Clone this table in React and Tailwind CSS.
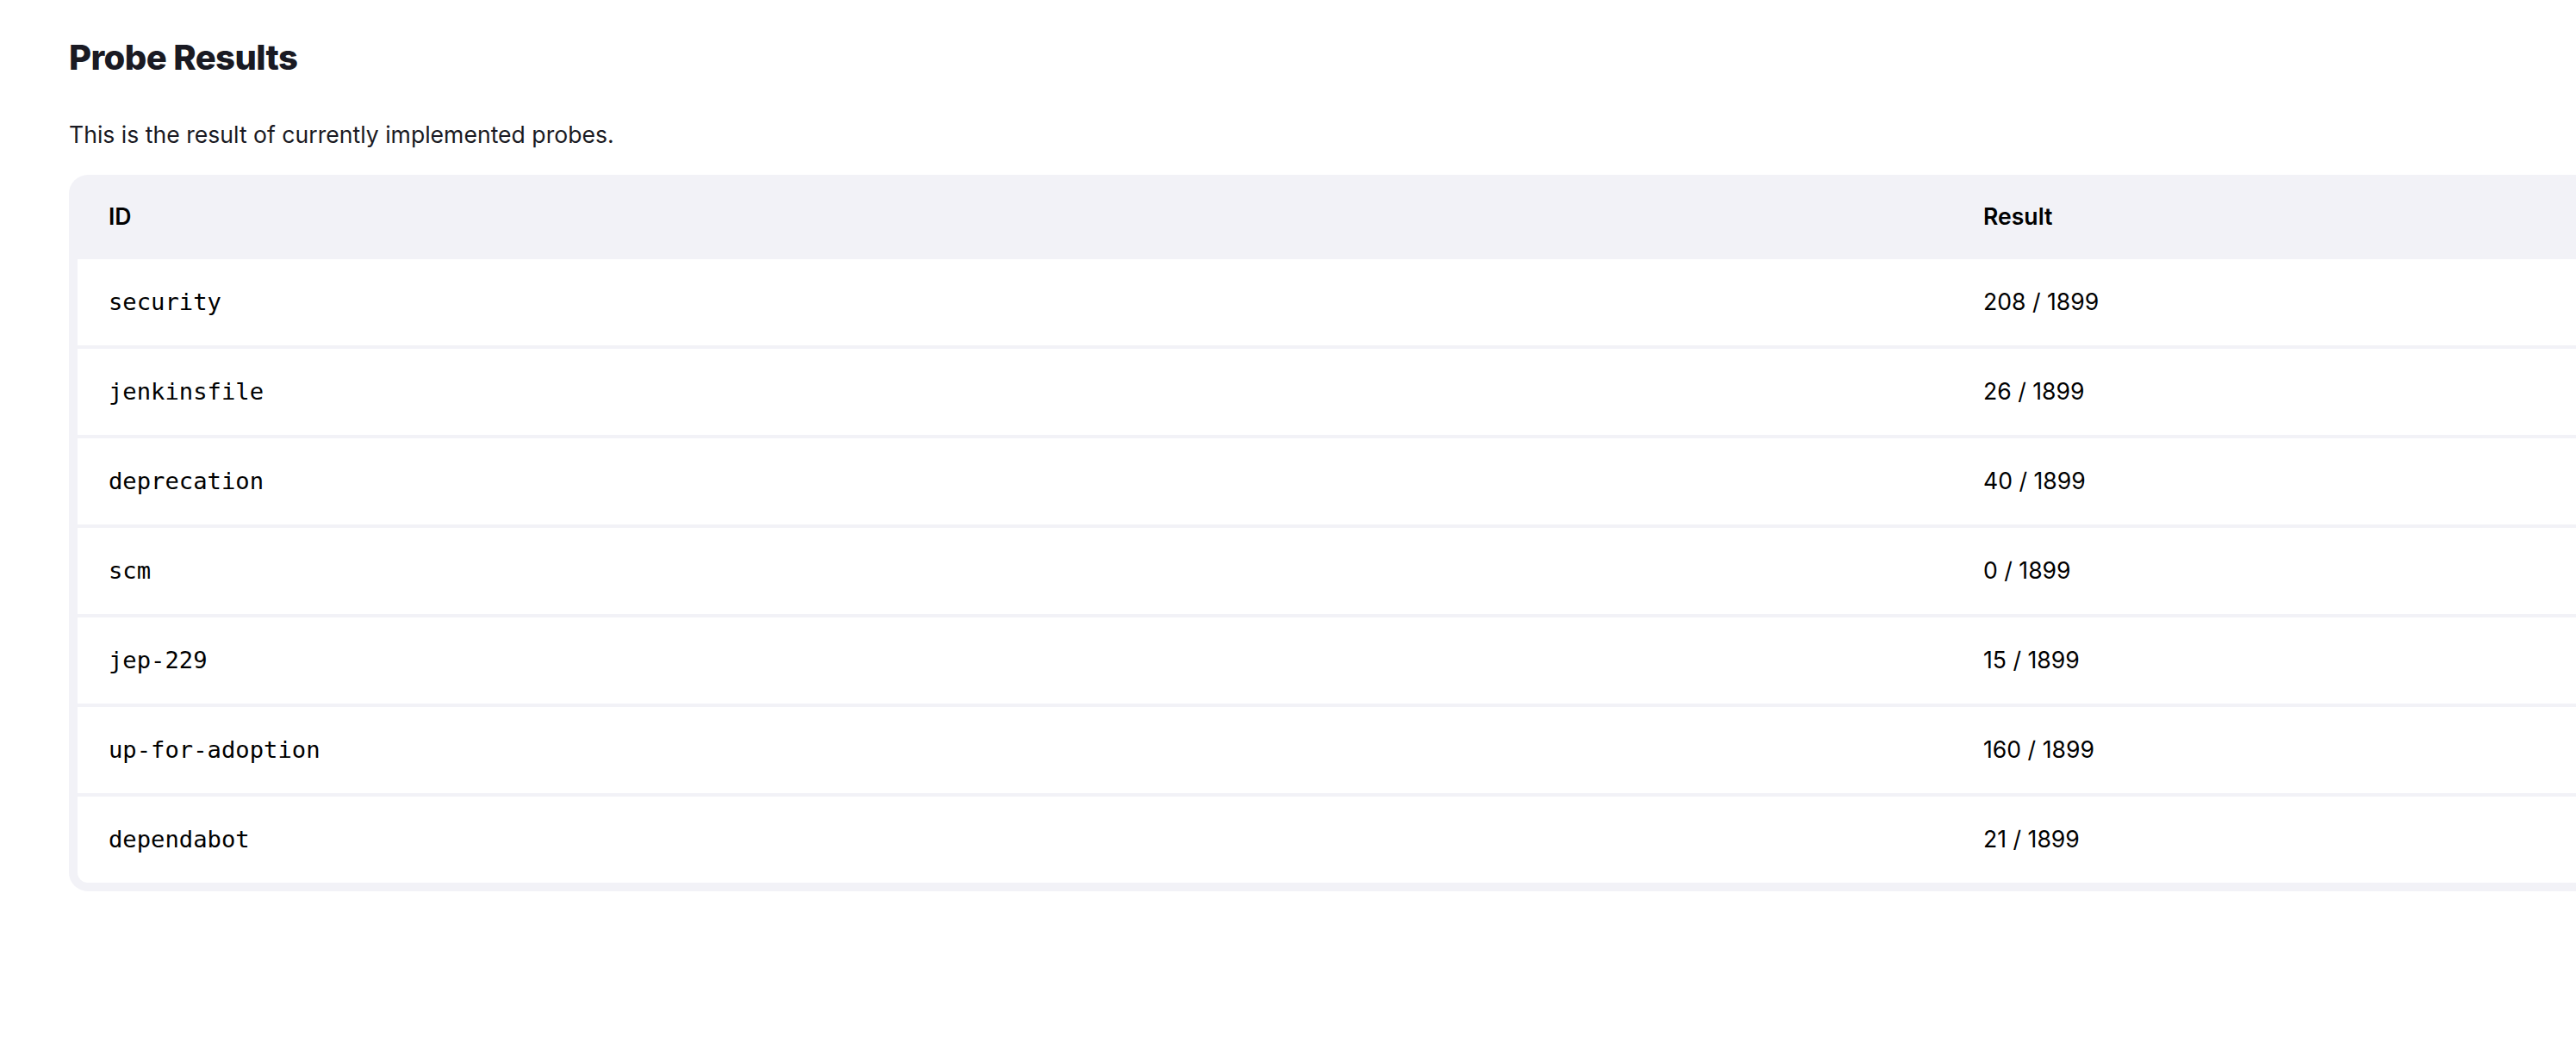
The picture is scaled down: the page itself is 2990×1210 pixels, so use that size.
import React from 'react';

const probes = [
  { id: 'security', result: '208 / 1899' },
  { id: 'jenkinsfile', result: '26 / 1899' },
  { id: 'deprecation', result: '40 / 1899' },
  { id: 'scm', result: '0 / 1899' },
  { id: 'jep-229', result: '15 / 1899' },
  { id: 'up-for-adoption', result: '160 / 1899' },
  { id: 'dependabot', result: '21 / 1899' },
];

const App = () => {
  return (
    <div className="w-screen min-h-screen overflow-hidden bg-white font-['Inter','Liberation_Sans',sans-serif]">
      <div className="pl-[80px] pt-[43px]">
        <h1 className="text-[40px] leading-[48px] font-extrabold text-[#1a1a23] tracking-[-0.015em]">
          Probe Results
        </h1>
        <p className="mt-[47px] text-[26.6px] leading-[36px] text-[#1a1a23]">
          This is the result of currently implemented probes.
        </p>

        <div className="mt-[29px] w-[4372px] rounded-[22px] bg-[#f2f2f7] px-[10px] pb-[10px]">
          <div className="grid grid-cols-[2176px_2176px] h-[98px] items-center text-[26.6px] font-semibold text-black">
            <div className="pl-[36px]">ID</div>
            <div className="pl-[36px]">Result</div>
          </div>

          <div className="flex flex-col gap-[3.8px] rounded-b-[12px] overflow-hidden">
            {probes.map((p) => (
              <div
                key={p.id}
                className="grid grid-cols-[2176px_2176px] h-[100.2px] items-center bg-white text-black"
              >
                <div className="pl-[36px] font-['DejaVu_Sans_Mono',monospace] text-[27.2px]">
                  {p.id}
                </div>
                <div className="pl-[36px] text-[26.6px]">{p.result}</div>
              </div>
            ))}
          </div>
        </div>
      </div>
    </div>
  );
};

export default App;
